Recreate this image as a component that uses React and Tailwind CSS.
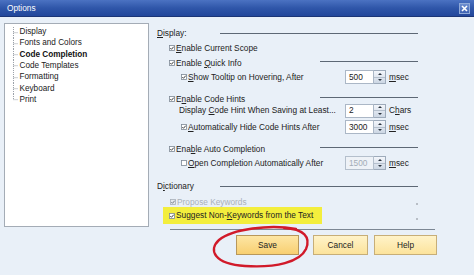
import React from "react";

function Check({ checked = true, disabled = false, size = 6 }) {
  return (
    <svg width={size} height={size} viewBox="0 0 6 6" className="shrink-0">
      <rect x="0.5" y="0.5" width="5" height="5" fill={disabled ? "#e4e8ee" : "#fff"} stroke={disabled ? "#a8b0ba" : "#7d8895"} strokeWidth="0.8" />
      {checked && (
        <path d="M1.3 3.1 L2.5 4.3 L4.7 1.7" fill="none" stroke={disabled ? "#6b737c" : "#2a2a2a"} strokeWidth="0.9" />
      )}
    </svg>
  );
}

function Spin({ value, disabled = false }) {
  return (
    <div className="flex h-[14px] w-[41px] shrink-0">
      <div
        className={
          disabled
            ? "flex flex-1 items-center border border-[#b4bfcc] bg-[#eef2f7] pl-[3px] text-[#a3acb6]"
            : "flex flex-1 items-center border border-[#abb7c6] bg-white pl-[3px] text-[#222]"
        }
      >
        {value}
      </div>
      <div className="flex w-[12px] flex-col border border-l-0 border-[#9eabbb] bg-gradient-to-b from-[#f3f6fb] to-[#cdd7e4]">
        <div className="flex flex-1 items-center justify-center border-b border-[#b5c0cd]">
          <svg width="4" height="2" viewBox="0 0 4 2">
            <path d="M0 2 L2 0 L4 2Z" fill="#2b3440" />
          </svg>
        </div>
        <div className="flex flex-1 items-center justify-center">
          <svg width="4" height="2" viewBox="0 0 4 2">
            <path d="M0 0 L2 2 L4 0Z" fill="#2b3440" />
          </svg>
        </div>
      </div>
    </div>
  );
}

function TreeRow({ label, bold = false, last = false }) {
  return (
    <div className="flex h-[11.33px] items-center">
      <svg width="14" height="11.33" viewBox="0 0 14 11.33" className="shrink-0">
        <line x1="8.5" y1="0" x2="8.5" y2={last ? 5.7 : 11.33} stroke="#9aa0a8" strokeWidth="1" strokeDasharray="1 1" />
        <line x1="8.5" y1="5.7" x2="13" y2="5.7" stroke="#9aa0a8" strokeWidth="1" strokeDasharray="1 1" />
      </svg>
      <span className={bold ? "ml-[0.5px] font-bold text-[#111]" : "ml-[0.5px] text-[#222]"}>{label}</span>
    </div>
  );
}

function GroupLine({ w, up = false }) {
  return <div className={`ml-auto mr-[2px] h-0 border-t border-[#5d6875] ${up ? "mb-[3px]" : ""} ${w}`} />;
}

function Btn({ children, primary = false, w }) {
  return (
    <div
      className={
        primary
          ? `flex h-[20px] items-center justify-center border border-[#b8975a] bg-gradient-to-b from-[#fde6a4] to-[#f8cf70] text-[#222] ${w}`
          : `flex h-[20px] items-center justify-center border border-[#c7ae78] bg-gradient-to-b from-[#fff3c9] to-[#fce39b] text-[#222] ${w}`
      }
    >
      {children}
    </div>
  );
}

export default function App() {
  return (
    <div className="relative h-[275px] w-[474px] overflow-hidden bg-[#e9f0f8] font-['Liberation_Sans',Arial,sans-serif] text-[8.3px] leading-none text-[#222]">
      {/* title bar */}
      <div className="flex h-[17px] items-center border-b border-[#1b3576] bg-gradient-to-b from-[#4b72c2] via-[#2f56a9] to-[#22479b] pl-[7px] pr-[4px]">
        <span className="text-[8.3px] text-white">Options</span>
        <div className="ml-auto flex h-[11px] w-[11px] items-center justify-center border border-[#8fa9d8] bg-gradient-to-b from-[#6e8fd0] to-[#3d62b3]">
          <svg width="7" height="7" viewBox="0 0 7 7">
            <path d="M1 1 L6 6 M6 1 L1 6" stroke="#fff" strokeWidth="1.6" />
          </svg>
        </div>
      </div>

      <div className="flex">
        {/* left tree panel */}
        <div className="ml-[4px] mt-[6px] h-[204px] w-[145px] shrink-0 border border-[#a4acb6] bg-white pt-[2.5px] text-[8.2px]">
          <TreeRow label="Display" />
          <TreeRow label="Fonts and Colors" />
          <TreeRow label="Code Completion" bold />
          <TreeRow label="Code Templates" />
          <TreeRow label="Formatting" />
          <TreeRow label="Keyboard" />
          <TreeRow label="Print" last />
        </div>

        {/* right options */}
        <div className="ml-[8px] flex w-[290px] flex-col pt-[11px]">
          {/* Display: */}
          <div className="flex h-[10px] w-[263px] items-center">
            <span>
              <span className="underline">D</span>isplay:
            </span>
            <GroupLine w="w-[198px]" />
          </div>

          <div className="mt-[5px] flex h-[10px] items-center gap-[1px] pl-[12px]">
            <Check />
            <span>
              <span className="underline">E</span>nable Current Scope
            </span>
          </div>

          <div className="mt-[5px] flex h-[10px] w-[263px] items-center gap-[1px] pl-[12px]">
            <Check />
            <span>
              Enable <span className="underline">Q</span>uick Info
            </span>
            <GroupLine w="w-[98px]" up />
          </div>

          <div className="mt-[2px] flex h-[14px] items-center">
            <div className="flex w-[188px] shrink-0 items-center gap-[1px] pl-[24px]">
              <Check />
              <span>
                <span className="underline">S</span>how Tooltip on Hovering, After
              </span>
            </div>
            <Spin value="500" />
            <span className="ml-[3px]">
              <span className="underline">m</span>sec
            </span>
          </div>

          <div className="mt-[10px] flex h-[10px] w-[263px] items-center gap-[1px] pl-[12px]">
            <Check />
            <span>
              E<span className="underline">n</span>able Code Hints
            </span>
            <GroupLine w="w-[98px]" up />
          </div>

          <div className="flex h-[13px] items-center">
            <div className="flex w-[188px] shrink-0 items-center pl-[22px]">
              <span>
                Display <span className="underline">C</span>ode Hint When Saving at Least...
              </span>
            </div>
            <Spin value="2" />
            <span className="ml-[3px]">
              C<span className="underline">h</span>ars
            </span>
          </div>

          <div className="mt-[3px] flex h-[14px] items-center">
            <div className="flex w-[188px] shrink-0 items-center gap-[1px] pl-[24px]">
              <Check />
              <span>
                <span className="underline">A</span>utomatically Hide Code Hints After
              </span>
            </div>
            <Spin value="3000" />
            <span className="ml-[3px]">
              <span className="underline">m</span>sec
            </span>
          </div>

          <div className="mt-[10px] flex h-[10px] w-[263px] items-center gap-[1px] pl-[12px]">
            <Check />
            <span>
              Ena<span className="underline">b</span>le Auto Completion
            </span>
            <GroupLine w="w-[98px]" up />
          </div>

          <div className="mt-[2px] flex h-[14px] items-center">
            <div className="flex w-[188px] shrink-0 items-center gap-[1px] pl-[24px]">
              <Check checked={false} />
              <span>
                <span className="underline">O</span>pen Completion Automatically After
              </span>
            </div>
            <Spin value="1500" disabled />
            <span className="ml-[3px]">
              <span className="underline">m</span>sec
            </span>
          </div>

          <div className="mt-[11px] flex h-[10px] w-[263px] items-center">
            <span>
              D<span className="underline">i</span>ctionary
            </span>
            <GroupLine w="w-[198px]" />
          </div>

          <div className="mt-[6px] flex h-[10px] w-[263px] items-center gap-[1px] pl-[13px]">
            <Check disabled />
            <span className="text-[#a9b1bb]">Propose Keywords</span>
            <div className="ml-auto mr-[2px] mt-[4px] h-[2px] w-[2px] bg-[#b8bec6]" />
          </div>

          <div className="flex h-[17px] w-[263px] items-center">
            <div className="ml-[6px] flex h-[17px] w-[159px] items-center gap-[1px] bg-[#f3ee3d] pl-[6px]">
              <Check />
              <span>
                Suggest Non-<span className="underline">K</span>eywords from the Text
              </span>
            </div>
            <div className="ml-auto mr-[2px] mt-[6px] h-[2px] w-[2px] bg-[#b8bec6]" />
          </div>

          <div className="ml-[13px] mt-[5px] h-0 w-[265px] border-t border-[#7c8794]" />

          <div className="mt-[5px] flex items-center pl-[79px]">
            <Btn primary w="w-[63px]">Save</Btn>
            <div className="ml-[14px]">
              <Btn w="w-[55px]">Cancel</Btn>
            </div>
            <div className="ml-[6px]">
              <Btn w="w-[63px]">Help</Btn>
            </div>
          </div>
        </div>
      </div>

      {/* hand-drawn red circle around Save */}
      <svg className="pointer-events-none absolute left-0 top-0" width="474" height="275" viewBox="0 0 474 275">
        <path
          d="M296 229 C270 224, 232 229, 219 240 C208 250, 214 264, 245 266 C276 268, 300 262, 306 249 C311 237, 304 229, 284 228"
          fill="none"
          stroke="#d11a2a"
          strokeWidth="2.4"
          strokeLinecap="round"
        />
      </svg>
    </div>
  );
}
